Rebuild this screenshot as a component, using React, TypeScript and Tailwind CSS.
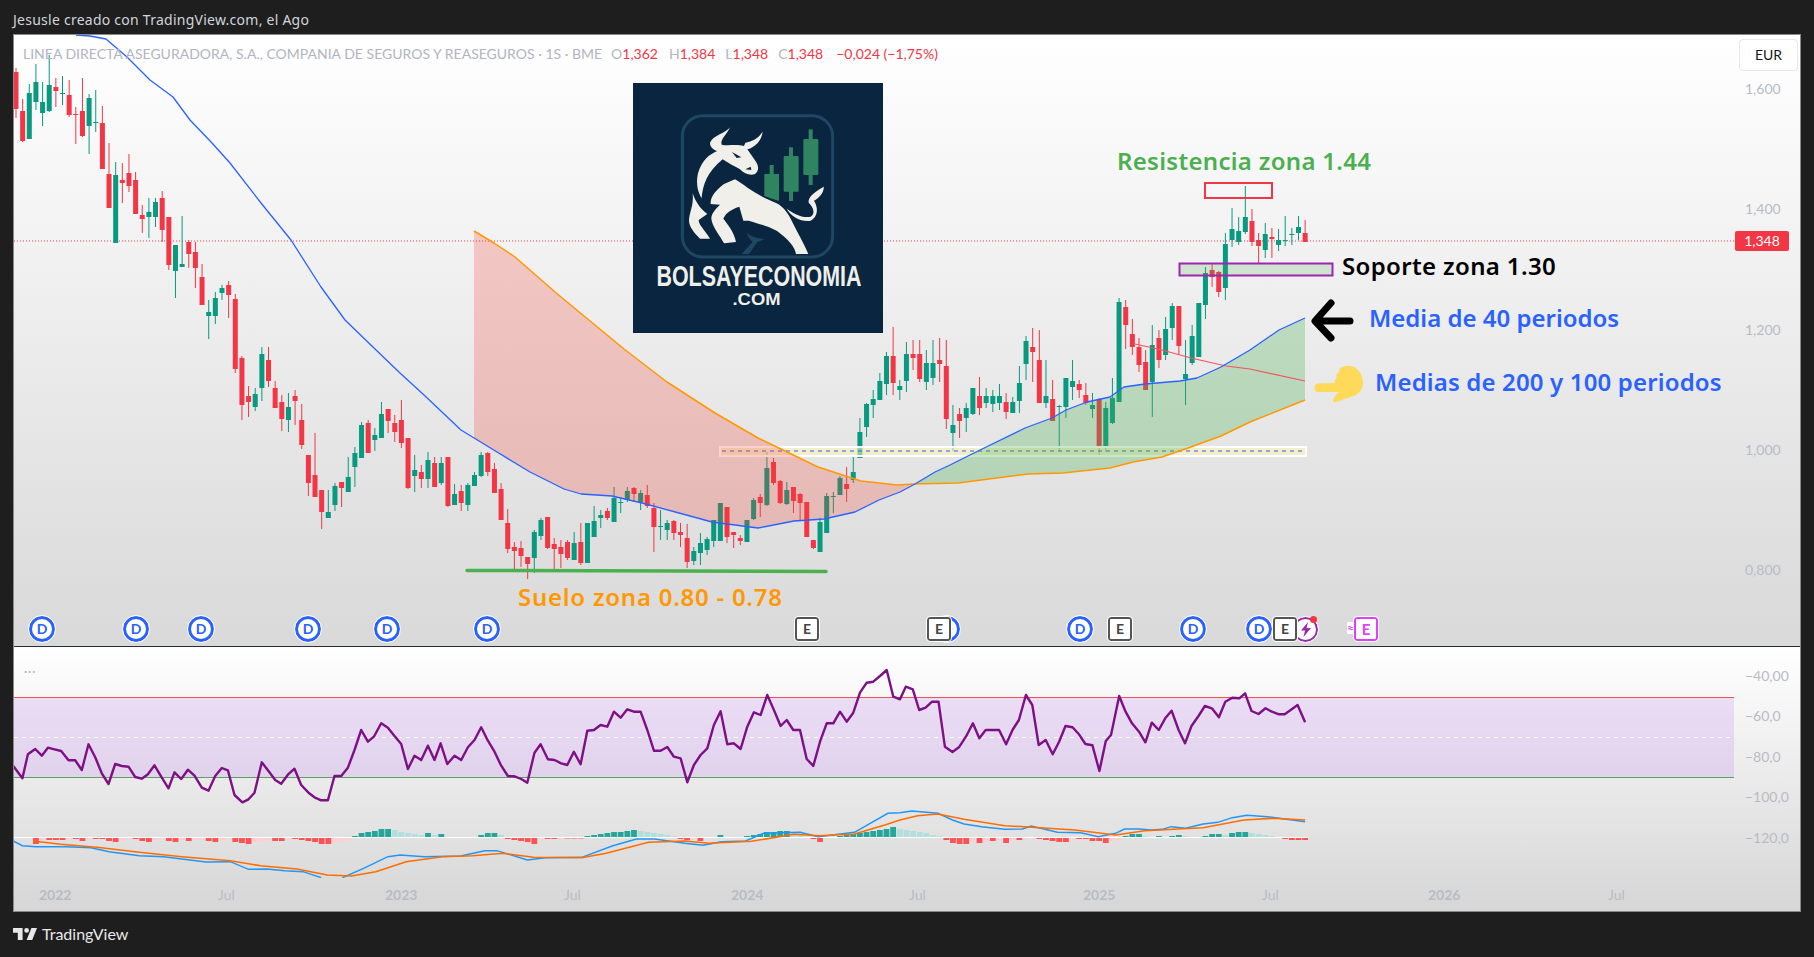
import React from 'react';

type Candle = ['g' | 'r', number, number, number, number];
type Pt = [number, number];

// wick top, body top, body bottom, wick bottom (page px)
const candles: Candle[] = [
  ['r',68,72,109,118],['r',99,111,141,142],['g',84,93,139,139],['g',64,82,102,110],['g',82,102,113,126],['g',55,85,111,112],['r',78,87,91,107],['g',76,93,94,105],['r',80,95,115,117],['r',107,114,115,144],
  ['r',78,111,136,137],['g',94,98,126,154],['g',90,122,123,132],['r',106,123,169,169],['r',143,174,208,186],['g',162,175,243,243],['r',163,180,183,203],['r',154,173,186,192],['r',172,180,214,214],['r',205,215,219,233],
  ['g',198,212,217,238],['g',198,202,217,227],['r',191,198,230,242],['r',217,217,265,270],['g',245,245,271,298],['g',216,264,267,267],['r',240,242,254,268],['r',242,252,268,288],['r',264,277,305,305],['g',300,312,316,339],
  ['g',292,298,316,324],['g',285,288,293,300],['r',281,285,295,318],['r',294,299,369,373],['r',356,358,405,420],['r',386,396,402,417],['g',388,394,407,411],['g',347,354,388,401],['r',347,360,381,387],['r',381,388,408,408],
  ['r',395,402,419,431],['g',393,407,420,432],['r',390,396,401,425],['r',404,420,445,449],['r',455,455,483,496],['r',433,475,497,497],['r',490,490,512,529],['g',490,512,518,518],['g',483,486,505,511],['r',482,482,488,507],
  ['g',457,477,492,492],['g',447,453,467,487],['g',422,425,458,458],['r',420,423,453,453],['g',428,435,440,451],['g',402,414,438,438],['r',409,409,421,433],['r',415,423,432,442],['r',400,420,443,448],['r',438,438,488,489],
  ['g',455,470,476,492],['r',465,472,479,488],['g',452,460,479,488],['r',457,463,487,487],['g',457,463,483,485],['r',457,457,506,507],['g',484,494,505,505],['r',485,491,503,511],['g',483,485,505,511],['g',472,475,486,486],
  ['g',452,455,476,477],['r',452,453,472,476],['r',463,469,493,493],['r',483,489,520,520],['r',509,523,549,553],['r',542,547,551,571],['r',541,548,556,567],['r',557,557,564,579],['g',530,532,558,573],['g',518,520,536,540],
  ['r',517,517,548,549],['r',538,544,549,570],['r',540,547,554,568],['r',540,542,558,560],['g',532,543,560,560],['r',523,542,563,565],['g',523,523,563,563],['g',506,521,537,537],['g',510,515,518,528],['r',508,511,518,520],
  ['g',487,498,522,522],['g',497,502,503,513],['g',487,491,500,502],['r',487,488,494,502],['g',490,493,502,510],['r',485,495,506,508],['r',503,508,527,552],['g',510,526,527,540],['g',520,523,530,540],['r',520,521,533,540],
  ['r',523,532,535,547],['r',524,538,562,568],['g',547,551,561,565],['g',533,543,553,565],['g',537,539,550,555],['g',520,520,541,547],['g',503,503,541,541],['r',507,507,537,543],['r',532,532,535,548],['r',535,538,541,545],
  ['g',520,520,542,542],['g',498,500,519,520],['r',494,497,503,517],['g',452,468,505,506],['r',458,462,483,485],['r',480,481,503,504],['g',482,490,504,505],['r',487,487,501,513],['r',493,494,503,520],['r',502,502,537,537],
  ['r',540,540,548,549],['g',518,522,552,552],['g',493,496,533,533],['g',492,496,497,513],['g',476,478,495,495],['r',467,484,489,502],['g',457,472,480,483],['g',418,432,458,458],['g',403,404,427,437],['g',390,399,405,418],
  ['g',373,381,400,400],['g',352,356,384,395],['r',327,356,383,395],['g',380,386,390,400],['g',342,354,381,392],['r',340,354,358,370],['r',340,354,379,382],['g',350,363,382,390],['g',340,363,378,385],['r',338,360,364,382],
  ['r',340,366,419,429],['g',405,425,433,451],['r',408,414,421,438],['g',403,408,418,432],['g',388,388,414,415],['r',377,396,408,415],['g',388,396,403,408],['g',390,396,404,412],['g',384,396,403,410],['r',393,402,412,419],
  ['g',397,402,413,413],['g',366,383,401,413],['g',336,341,364,380],['r',328,347,352,382],['r',330,360,403,403],['g',360,396,403,408],['r',380,399,421,421],['g',405,406,407,451],['g',378,378,407,418],['g',360,381,387,400],
  ['r',380,384,390,398],['r',383,395,403,405],['g',393,405,409,418],['r',398,399,448,456],['g',402,408,448,452],['g',378,398,423,424],['g',298,302,402,402],['r',300,307,325,349],['r',319,334,347,355],['r',338,347,365,372],
  ['r',350,362,390,390],['g',325,345,382,417],['r',330,338,360,368],['g',317,329,355,360],['g',303,306,328,340],['r',306,306,346,355],['g',340,374,379,405],['g',325,336,363,365],['g',303,303,357,357],['g',267,273,305,319],
  ['r',263,270,277,287],['r',271,272,292,297],['g',233,244,288,300],['g',208,229,240,247],['g',217,231,242,245],['g',186,217,232,234],['r',209,221,242,246],['r',233,240,246,263],['g',223,234,250,258],['r',228,237,239,258],
  ['g',229,240,245,251],['g',216,240,241,246],['g',228,234,235,245],['g',216,227,233,240],['r',220,233,242,242],
];

const blue: Pt[] = [[76,35],[90,36],[106,39],[127,57],[150,80],[173,97],[190,120],[212,143],[230,163],[261,203],[291,240],[321,287],[345,320],[375,349],[400,373],[424,395],[461,430],[497,452],[530,472],[564,489],[581,494],[612,496],[642,503],[679,513],[712,522],[758,528],[794,521],[824,519],[855,512],[879,500],[900,492],[915,484],[935,472],[950,465],[976,452],[1025,428],[1052,418],[1066,410],[1087,402],[1110,397],[1124,387],[1145,384],[1180,381],[1197,378],[1221,367],[1250,350],[1279,330],[1305,318]];
const orange: Pt[] = [[474,231],[494,243],[515,257],[555,292],[624,349],[667,382],[715,413],[758,438],[818,467],[861,481],[897,485],[915,484],[958,483],[1028,474],[1063,473],[1110,468],[1133,462],[1162,457],[1191,447],[1221,436],[1250,422],[1305,400]];
const red100: Pt[] = [[1135,344],[1162,350],[1191,358],[1226,366],[1250,369],[1305,381]];

const z5 = (p: Pt): Pt => [p[0] / 1.65, 640 + p[1] / 3];
const z6 = (p: Pt): Pt => [900 + p[0] / 1.7155, 640 + p[1] / 3];
const str = (pts: Pt[]) => pts.map((p) => `${p[0].toFixed(1)},${p[1].toFixed(1)}`).join(' ');

const rsi: Pt[] = [
  ...([[22,378],[37,415],[46,343],[58,327],[69,347],[79,323],[90,328],[101,333],[113,361],[124,361],[135,390],[146,313],[157,352],[168,400],[179,432],[190,372],[201,378],[212,380],[223,411],[234,416],[244,403],[255,376],[266,410],[278,445],[288,397],[299,417],[310,389],[321,407],[333,443],[344,452],[355,408],[366,384],[376,391],[387,465],[400,487],[410,478],[420,458],[432,367],[443,393],[454,420],[464,431],[475,404],[486,386],[497,435],[509,458],[519,472],[530,481],[541,481],[552,408],[563,408],[574,383],[585,330],[596,270],[607,305],[617,290],[629,250],[640,263],[651,288],[662,312],[673,387],[684,347],[695,360],[706,317],[717,360],[727,310],[738,372],[750,347],[761,360],[772,322],[783,300],[794,262],[805,302],[816,335],[827,377],[838,408],[849,409],[860,417],[870,428],[882,338],[892,313],[904,358],[915,360],[926,370],[936,375],[947,335],[958,373],[969,272],[980,270],[991,255],[1002,260],[1013,215],[1024,233],[1035,208],[1046,215],[1057,215],[1068,270],[1079,332],[1090,332],[1101,321],[1112,350],[1123,355],[1134,427],[1145,375],[1156,345],[1167,325],[1178,255],[1189,214],[1200,313],[1211,310],[1222,327],[1233,260],[1244,217],[1255,225],[1266,165],[1277,210],[1288,258],[1298,240],[1309,270],[1320,270],[1331,357],[1342,378],[1353,305],[1364,250],[1375,250],[1386,215],[1397,245],[1408,218],[1419,158],[1430,128],[1441,125],[1452,108],[1463,90],[1474,170],[1485,178]] as Pt[]).map(z5),
  ...([[10,140],[22,148],[33,210],[44,203],[55,185],[66,185],[77,320],[90,336],[101,322],[113,290],[125,250],[136,295],[147,270],[170,270],[182,313],[193,270],[204,240],[216,165],[227,195],[238,315],[250,300],[262,343],[273,305],[284,258],[296,262],[307,283],[318,312],[330,316],[342,393],[353,303],[362,285],[376,168],[387,215],[398,250],[410,275],[421,307],[432,248],[444,270],[455,235],[466,212],[478,270],[489,310],[500,258],[512,228],[523,198],[535,205],[547,232],[558,185],[570,173],[582,175],[592,160],[603,213],[615,222],[627,205],[638,215],[650,223],[660,223],[672,208],[682,195],[695,247]] as Pt[]).map(z6),
];

const macdA: Pt[] = ([[22,603],[37,617],[60,620],[110,620],[150,623],[180,635],[230,647],[270,650],[300,657],[340,666],[380,665],[410,688],[440,687],[470,692],[500,695],[530,713]] as Pt[]).map(z5);
const macdB: Pt[] = [
  ...([[565,713],[600,685],[640,650],[660,645],[700,650],[760,648],[800,632],[820,632],[870,660],[900,653],[960,652],[1010,618],[1050,597],[1080,597],[1130,610],[1160,616],[1190,605],[1230,603],[1260,580],[1320,577],[1350,590],[1410,577],[1465,520]] as Pt[]).map(z5),
  ...([[0,518],[20,513],[65,520],[90,540],[110,552],[140,560],[180,568],[210,567],[225,558],[270,577],[310,578],[340,590],[370,580],[385,567],[410,567],[430,570],[450,568],[465,560],[490,565],[520,552],[545,547],[570,533],[595,526],[630,530],[660,537],[695,545]] as Pt[]).map(z6),
];
const signal: Pt[] = [
  ...([[55,603],[100,613],[160,622],[230,637],[300,650],[380,662],[430,677],[490,687],[540,705],[580,708],[620,695],[670,665],[730,650],[780,647],[830,640],[880,652],[960,653],[1000,640],[1070,607],[1130,603],[1170,610],[1240,604],[1310,583],[1350,587],[1410,582],[1460,555]] as Pt[]).map(z5),
  ...([[0,540],[30,527],[65,522],[110,538],[180,557],[220,561],[300,570],[370,585],[420,572],[520,563],[590,540],[640,535],[695,540]] as Pt[]).map(z6),
];

const hist = [
  0,0,0,-6,-2,-2,-2,-2,-1,-1,-3,-1,-1,-1,-3,-4,-2,-1,-1,-3,-4,-2,-1,-3,-4,-2,-3,-2,-1,-3,-4,-2,-1,-4,-5,-6,-4,-3,-2,-3,
  -3,-1,-1,-2,-3,-4,-6,-6,-5,-4,-2,2,5,6,7,9,9,8,6,5,4,3,5,3,4,1,1,0.5,0.5,1,3,5,5,3,-1,-2,-3,-4,-6,-1,
  -1,-1,-0.5,-0.5,-0.5,-0.5,2,3,4,5,6,6,7,8,7,6,5,4,3,2,-1,-2,-1,-3,0.5,0.5,3,1,1,1,2,3,4,6,6,7,7,6,4,1,
  -1,-4,1,0.5,2,3,4,5,6,7,8,9,11,9,8,7,6,5,3,2,-2,-5,-6,-6,-3,-5,-3,-3,-2,-5,-2,-2,-1,1,-1,-2,-3,-4,-4,-1,
  -1,-1,-3,-3,-5,-3,-2,2,4,4,2,1,2,1,2,3,2,1,1,2,4,4,3,5,6,6,5,4,3,2,1,-1,-2,-2,-2,
];

const candleX = (i: number) => 16 + i * 6.645;
const green = '#089981';
const redC = '#f23645';

const polyBetween = (top: Pt[], bottom: Pt[]) => str([...top, ...[...bottom].reverse()]);

const redFill = polyBetween(
  orange.filter((p) => p[0] <= 915),
  [[474, 438], ...blue.filter((p) => p[0] > 474 && p[0] <= 915)],
);
const greenFill = polyBetween(
  blue.filter((p) => p[0] >= 915),
  orange.filter((p) => p[0] >= 915),
);

const PriceChart = () => (
  <svg className="absolute inset-0 h-full w-full" viewBox="14 35 1720 611">
    <line x1="14" x2="1734" y1="241" y2="241" stroke={redC} strokeWidth="1" strokeDasharray="1 2" />
    {candles.map((c, i) => {
      const x = candleX(i);
      const col = c[0] === 'g' ? green : redC;
      return (
        <g key={i}>
          <line x1={x} x2={x} y1={c[1]} y2={c[4]} stroke={col} strokeWidth="1" />
          <rect x={x - 2.5} y={c[2]} width="5" height={Math.max(c[3] - c[2], 1)} fill={col} />
        </g>
      );
    })}
    {/* 1.000 zone */}
    <rect x="720" y="447" width="586" height="9" fill="#fff5b0" fillOpacity="0.55" stroke="#ffffff" strokeWidth="2" />
    <line x1="722" x2="1305" y1="451" y2="451" stroke="#2962ff" strokeWidth="1" strokeDasharray="4 4" />
    <polygon points={redFill} fill="#f44336" fillOpacity="0.25" />
    <polygon points={greenFill} fill="#4caf50" fillOpacity="0.3" />
    <polyline points={str(red100)} fill="none" stroke="#f7525f" strokeWidth="1.2" />
    <polyline points={str(orange)} fill="none" stroke="#ff9800" strokeWidth="1.5" strokeLinejoin="round" />
    <polyline points={str(blue)} fill="none" stroke="#2962ff" strokeWidth="1.3" strokeLinejoin="round" />
    <rect x="1205" y="183" width="67" height="15" fill="none" stroke={redC} strokeWidth="2" />
    <rect x="1179.5" y="263.5" width="153" height="12" fill="#4caf50" fillOpacity="0.2" stroke="#9c27b0" strokeWidth="2" />
    <line x1="467" x2="826" y1="570.5" y2="571.5" stroke="#4caf50" strokeWidth="3.5" strokeLinecap="round" />
    {/* arrow */}
    <path d="M1350 321H1317M1331 303L1315 321L1331 338" fill="none" stroke="#000000" strokeWidth="7" strokeLinecap="round" strokeLinejoin="round" />
    {/* pointing hand */}
    <path d="M1345 366C1355 364 1363 372 1363 383C1363 394 1352 397 1345 399C1341 400 1336 403 1333 402C1333 398 1335 395 1339 392L1318 392C1313 392 1313 384 1318 383.5L1335 383C1334 380 1338 378 1336 375C1338 373 1340 371 1340 368Z" fill="#ffd95a" />
  </svg>
);

const Logo = () => (
  <div className="absolute left-[619px] top-[48px] h-[250px] w-[250px] bg-[#0a2540]">
    <svg className="h-full w-full" viewBox="633 83 250 250">
      <g transform="translate(620 70) scale(0.33333)">
        <rect x="187" y="137" width="451" height="424" rx="62" fill="none" stroke="#1f4764" strokeWidth="9" />
        <path d="M380 488Q398 505 435 507L412 516L387 552L365 552L398 515Q385 505 380 488Z" fill="#1f4764" />
        <g fill="#2f855f">
          <rect x="449" y="285" width="12" height="100" />
          <path d="M433 312H477V393L433 378Z" />
          <rect x="507" y="232" width="12" height="161" />
          <rect x="491" y="258" width="45" height="107" rx="3" />
          <rect x="566" y="178" width="12" height="167" />
          <rect x="550" y="207" width="45" height="108" rx="3" />
        </g>
        <g fill="#f1efea">
          <path d="M330 172C318 190 280 195 270 218C270 232 282 240 292 243C270 252 245 270 234 310C226 345 236 370 245 385C248 345 262 305 308 268C325 280 345 290 360 298C372 312 392 318 405 312C418 302 416 288 408 275L382 238C405 232 425 212 428 185C415 205 395 215 376 218L372 228C350 222 325 228 305 224C300 208 320 195 330 172Z" />
          <path d="M345 328C375 345 400 372 470 400C492 412 506 432 518 458C534 490 552 520 565 552H528C524 530 506 508 470 482C440 466 410 460 386 452L370 452L358 410C340 416 318 426 310 446C322 462 342 484 348 516L312 520C302 500 276 470 274 446C274 430 288 416 300 404L272 402C270 380 290 358 312 342Z" />
          <path d="M218 370C226 392 236 412 262 432L236 450C236 466 258 484 270 506L240 506C224 490 206 470 207 450C208 428 222 405 218 370Z" />
          <path d="M500 416C520 430 548 446 572 440C586 432 582 414 566 398C562 380 590 362 612 350C610 372 596 384 582 392C596 414 594 440 572 452C545 456 515 442 500 416Z" />
        </g>
        <path d="M336 246L364 262L350 264Z" fill="#0a2540" />
        <path d="M376 298L392 290L394 300Z" fill="#0a2540" />
      </g>
      <text x="656.5" y="286" textLength="205" lengthAdjust="spacingAndGlyphs" fill="#efefea" fontSize="29" fontWeight="700" fontFamily="'Liberation Sans', sans-serif">BOLSAYECONOMIA</text>
      <text x="732.5" y="304.5" textLength="48" lengthAdjust="spacingAndGlyphs" fill="#efefea" fontSize="16.5" fontWeight="700" fontFamily="'Liberation Sans', sans-serif">.COM</text>
    </svg>
  </div>
);

const dividendClasses = [
  'left-[15px]', 'left-[109px]', 'left-[174px]', 'left-[281px]', 'left-[360px]', 'left-[460px]', 'left-[920px]', 'left-[1053px]', 'left-[1166px]', 'left-[1232px]',
];
const earningClasses = ['left-[781px]', 'left-[913px]', 'left-[1094px]', 'left-[1259px]'];

const EventMarks = () => (
  <>
    {dividendClasses.map((pos, i) => (
      <div key={i} className={`absolute top-[581px] flex h-[26px] w-[26px] items-center justify-center rounded-full border-[3px] border-[#2962ff] bg-white text-[14px] font-bold leading-none text-[#2962ff] outline outline-1 outline-white ${pos}`}>
        D
      </div>
    ))}
    <div className="absolute left-[1279px] top-[582px] flex h-[25px] w-[25px] items-center justify-center rounded-full border-[2px] border-[#9c27b0] bg-white outline outline-1 outline-white">
      <svg className="h-[15px] w-[12px]" viewBox="0 0 12 15">
        <path d="M8 0L1 8.5H5L3.5 15L11 6H6.5Z" fill="#9c27b0" />
      </svg>
      <div className="absolute -right-[1px] -top-[3px] h-[7px] w-[7px] rounded-full bg-[#f23645]" />
    </div>
    {earningClasses.map((pos, i) => (
      <div key={i} className={`absolute top-[582px] flex h-[24px] w-[24px] items-center justify-center rounded-[3px] border-[2px] border-[#555555] bg-white text-[14px] font-bold leading-none text-[#444444] outline outline-1 outline-white ${pos}`}>
        E
      </div>
    ))}
    <div className="absolute left-[1340px] top-[582px] flex h-[24px] w-[24px] items-center justify-center rounded-[3px] border-[2px] border-[#e040fb] bg-white text-[15px] font-bold leading-none text-[#e040fb] outline outline-1 outline-white">
      E
      <span className="absolute -left-[9px] top-[3px] bg-white text-[12px] font-bold leading-[12px]">≈</span>
    </div>
  </>
);

const noteClass = "absolute font-['Noto_Sans',sans-serif] text-[24px] font-semibold leading-[30px]";

const Notes = () => (
  <>
    <div className={`${noteClass} left-[1103px] top-[111px] tracking-[0.3px] text-[#4caf50]`}>Resistencia zona 1.44</div>
    <div className={`${noteClass} left-[1328px] top-[216px] tracking-[0.35px] text-black`}>Soporte zona 1.30</div>
    <div className={`${noteClass} left-[1355px] top-[268px] text-[#2962ff]`}>Media de 40 periodos</div>
    <div className={`${noteClass} left-[1361px] top-[332px] tracking-[0.15px] text-[#2962ff]`}>Medias de 200 y 100 periodos</div>
    <div className={`${noteClass} left-[504px] top-[547px] tracking-[0.75px] text-[#ff9800]`}>Suelo zona 0.80 - 0.78</div>
  </>
);

const Legend = () => (
  <div className="absolute left-[9px] top-[8px] flex h-[20px] items-center whitespace-nowrap text-[14px] text-[#b2b5be]">
    <span>LINEA DIRECTA ASEGURADORA, S.A., COMPANIA DE SEGUROS Y REASEGUROS · 1S · BME</span>
    <span className="ml-[9px]">O<span className="text-[#f23645]">1,362</span></span>
    <span className="ml-[11px]">H<span className="text-[#f23645]">1,384</span></span>
    <span className="ml-[10px]">L<span className="text-[#f23645]">1,348</span></span>
    <span className="ml-[10px]">C<span className="text-[#f23645]">1,348</span></span>
    <span className="ml-[13px] text-[#f23645]">−0,024 (−1,75%)</span>
  </div>
);

const LowerChart = () => (
  <svg className="h-[231px] w-[1720px]" viewBox="14 647 1720 231">
    <rect x="14" y="697" width="1720" height="80" fill="#af4bf1" fillOpacity="0.15" />
    <line x1="14" x2="1734" y1="697.5" y2="697.5" stroke="#ef5350" strokeWidth="1" />
    <line x1="14" x2="1734" y1="737.5" y2="737.5" stroke="#ffffff" strokeWidth="1" strokeDasharray="4 4" />
    <line x1="14" x2="1734" y1="777.5" y2="777.5" stroke="#5aa35e" strokeWidth="1" />
    <polyline points={str(rsi)} fill="none" stroke="#7e1085" strokeWidth="2.4" strokeLinejoin="round" />
    {hist.map((v, i) => {
      if (v === 0) return null;
      const prev = i > 0 ? hist[i - 1] : 0;
      const strong = Math.abs(v) >= Math.abs(prev) || prev * v < 0;
      const col = v > 0 ? (strong ? '#26a69a' : '#b2dfdb') : strong ? '#ff5252' : '#ffcdd2';
      const h = Math.abs(v);
      return <rect key={i} x={candleX(i) - 2.9} y={v > 0 ? 838 - h : 838} width="5.8" height={h} fill={col} />;
    })}
    <line x1="14" x2="1308" y1="837.5" y2="837.5" stroke="#ffffff" strokeWidth="1" />
    <polyline points={str(macdA)} fill="none" stroke="#2196f3" strokeWidth="1.4" />
    <polyline points={str(macdB)} fill="none" stroke="#2196f3" strokeWidth="1.4" />
    <polyline points={str(signal)} fill="none" stroke="#ff6d00" strokeWidth="1.6" />
  </svg>
);

const timeLabels = [
  { text: '2022', pos: 'left-[25px]', year: true },
  { text: 'Jul', pos: 'left-[204px]', year: false },
  { text: '2023', pos: 'left-[371px]', year: true },
  { text: 'Jul', pos: 'left-[550px]', year: false },
  { text: '2024', pos: 'left-[717px]', year: true },
  { text: 'Jul', pos: 'left-[895px]', year: false },
  { text: '2025', pos: 'left-[1069px]', year: true },
  { text: 'Jul', pos: 'left-[1248px]', year: false },
  { text: '2026', pos: 'left-[1414px]', year: true },
  { text: 'Jul', pos: 'left-[1594px]', year: false },
];

const priceLabels = ['1,600', '1,400', '1,200', '1,000', '0,800'];
const lowerLabels = ['−40,00', '−60,0', '−80,0', '−100,0', '−120,0'];

const App = () => {
  return (
    <div className="flex h-[957px] w-[1814px] flex-col overflow-hidden bg-[#1e1e1e] font-['Lato','Liberation_Sans',sans-serif]">
      <header className="flex h-[34px] items-center pl-[13px] pt-[4px] font-['Noto_Sans',sans-serif] text-[14px] tracking-[0.25px] text-[#d1d4dc]">
        Jesusle creado con TradingView.com, el Ago
      </header>

      <div className="ml-[13px] flex h-[878px] w-[1788px] flex-col border border-[#8a8a8a]">
        {/* price pane */}
        <div className="flex h-[611px] bg-gradient-to-b from-white to-[#d9d9d9]">
          <div className="relative w-[1720px]">
            <PriceChart />
            <Legend />
            <Logo />
            <EventMarks />
            <Notes />
          </div>
          <div className="relative flex flex-1 flex-col pl-[11px] text-[14px] leading-[20px] text-[#b8bbc4]">
            <div className="mb-[8px] ml-[-6px] mt-[4px] flex h-[32px] w-[59px] items-center justify-center rounded-[4px] border border-[#e6e7ea] bg-white text-[14px] text-[#131722]">
              EUR
            </div>
            <div className="flex flex-col gap-[100.25px]">
              {priceLabels.map((label) => (
                <div key={label}>{label}</div>
              ))}
            </div>
            <div className="absolute left-[1px] top-[196px] flex h-[20px] w-[54px] items-center justify-center rounded-[2px] bg-[#f23645] text-[14px] text-white">
              1,348
            </div>
          </div>
        </div>

        <div className="h-[1px] bg-[#2a2e39]" />

        {/* indicators + time axis */}
        <div className="flex flex-1 flex-col bg-gradient-to-b from-white to-[#d6d6d6]">
          <div className="flex">
            <div className="relative w-[1720px]">
              <LowerChart />
              <div className="absolute left-[10px] top-[14px] text-[13px] font-bold leading-[14px] tracking-[1px] text-[#b2b5be]">...</div>
            </div>
            <div className="flex flex-1 flex-col pl-[11px] pt-[8px] text-[14px] text-[#b8bbc4]">
              {lowerLabels.map((label) => (
                <div key={label} className="flex h-[40.5px] items-center">{label}</div>
              ))}
            </div>
          </div>
          <div className="relative flex-1 text-[14px] text-[#b8bbc4]">
            {timeLabels.map((t) => (
              <span key={t.pos} className={`absolute top-[7px] leading-[20px] ${t.pos} ${t.year ? 'font-bold' : ''}`}>
                {t.text}
              </span>
            ))}
          </div>
        </div>
      </div>

      <footer className="flex flex-1 items-center gap-[5px] pb-[1px] pl-[13px] text-[16px] text-[#e8e8e8]">
        <svg className="h-[16px] w-[24px]" viewBox="2 6 30 15">
          <path d="M14 6H2v6h6v9h6V6Zm12 15h-7l6-15h7l-6 15Zm-7-9a3 3 0 1 0 0-6 3 3 0 0 0 0 6Z" fill="#e8e8e8" />
        </svg>
        <span>TradingView</span>
      </footer>
    </div>
  );
};

export default App;
